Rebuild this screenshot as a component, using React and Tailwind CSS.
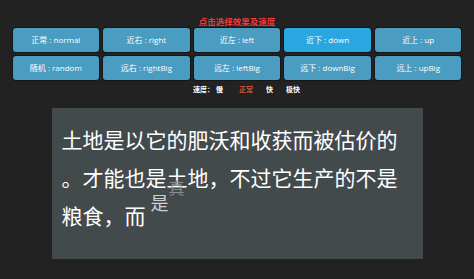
import { useState } from "react";

const effects = [
  ["正常", "normal"],
  ["近右", "right"],
  ["近左", "left"],
  ["近下", "down"],
  ["近上", "up"],
  ["随机", "random"],
  ["远右", "rightBig"],
  ["远左", "leftBig"],
  ["远下", "downBig"],
  ["远上", "upBig"],
];

const speeds = ["慢", "正常", "快", "极快"];

export default function App() {
  const [effect, setEffect] = useState("down");
  const [speed, setSpeed] = useState("正常");

  return (
    <div
      className="min-h-[279px] bg-[#222222] pt-[16px] text-white"
      style={{ fontFamily: '"Open Sans", "Noto Sans CJK SC", sans-serif' }}
    >
      <p className="text-center text-[8.5px] leading-[12px] font-bold text-[#f03a3a]">点击选择效果及速度</p>

      <div className="w-[449px] mx-auto grid grid-cols-5 gap-[4px]">
        {effects.map(([zh, en]) => (
          <button
            key={en}
            onClick={() => setEffect(en)}
            className={`h-[24px] rounded-[3px] text-[8px] text-white shadow-[0_0_0_1px_#161616] ${effect === en ? "bg-[#2aa7e0]" : "bg-[#4a9cc1]"}`}
          >
            {zh} : {en}
          </button>
        ))}
      </div>

      <div className="flex items-center gap-[13px] h-[18px] mt-[1px] pl-[193px] text-[7px] font-bold">
        <span className="-mr-[11px]">速度：</span>
        {speeds.map((s) => (
          <span
            key={s}
            onClick={() => setSpeed(s)}
            className={`cursor-pointer ${speed === s ? "text-[#e0532f] ml-[3px]" : "text-white"}`}
          >
            {s}
          </span>
        ))}
      </div>

      <div
        className="w-[371px] h-[151px] mx-auto mt-[9px] bg-[#434a4c] pl-[10px] pt-[12px] text-[21px] leading-[38px] text-white"
        style={{ fontFamily: '"Noto Sans CJK SC", sans-serif' }}
      >
        土地是以它的肥沃和收获而被估价的
        <br />
        。才能也是土地，不过它生产的不是
        <br />
        粮食，而
        <span className="relative -top-[14px] ml-[5px] text-[18px] text-[#cfd2d3]">是</span>
        <span className="relative -top-[30px] text-[16px] text-[#8a8e90]">真</span>
      </div>
    </div>
  );
}
